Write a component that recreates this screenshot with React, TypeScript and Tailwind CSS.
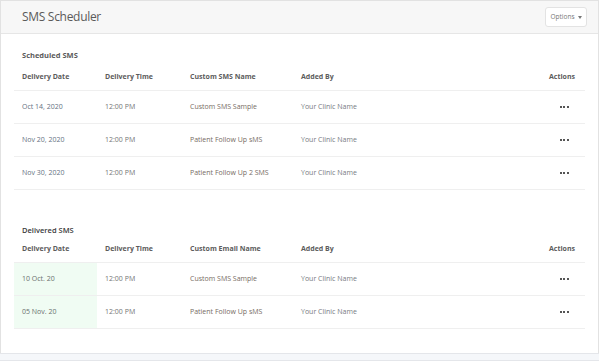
import React from 'react';

type Row = { date: string; time: string; name: string; by: string };

const scheduled: Row[] = [
  { date: 'Oct 14, 2020', time: '12:00 PM', name: 'Custom SMS Sample', by: 'Your Clinic Name' },
  { date: 'Nov 20, 2020', time: '12:00 PM', name: 'Patient Follow Up sMS', by: 'Your Clinic Name' },
  { date: 'Nov 30, 2020', time: '12:00 PM', name: 'Patient Follow Up 2 SMS', by: 'Your Clinic Name' },
];

const delivered: Row[] = [
  { date: '10 Oct. 20', time: '12:00 PM', name: 'Custom SMS Sample', by: 'Your Clinic Name' },
  { date: '05 Nov. 20', time: '12:00 PM', name: 'Patient Follow Up sMS', by: 'Your Clinic Name' },
];

const Dots = () => (
  <div className="flex gap-[1.5px]">
    <span className="w-[2px] h-[2px] bg-[#555]" />
    <span className="w-[2px] h-[2px] bg-[#555]" />
    <span className="w-[2px] h-[2px] bg-[#555]" />
  </div>
);

const HeaderRow = ({ nameLabel, h }: { nameLabel: string; h: string }) => (
  <div className={`flex items-center ${h} border-b border-[#efefef] text-[7px] font-bold text-[#5c5c5c]`}>
    <div className="w-[83px] pl-[8px]">Delivery Date</div>
    <div className="w-[85px] pl-[8px]">Delivery Time</div>
    <div className="w-[111px] pl-[8px]">{nameLabel}</div>
    <div className="flex-1 pl-[8px]">Added By</div>
    <div className="pr-[10px]">Actions</div>
  </div>
);

const DataRow = ({ row, green }: { row: Row; green?: boolean }) => (
  <div className="flex h-[33px] border-b border-[#efefef] text-[7px]">
    <div className={`w-[83px] pl-[8px] flex items-center ${green ? 'bg-[#f0fcf3] text-[#6a716e]' : 'text-[#66717f]'}`}>{row.date}</div>
    <div className="w-[85px] pl-[8px] flex items-center text-[#757575]">{row.time}</div>
    <div className="w-[111px] pl-[8px] flex items-center text-[#776c64]">{row.name}</div>
    <div className="flex-1 pl-[8px] flex items-center text-[#777b82]">{row.by}</div>
    <div className="w-[40px] flex items-center justify-center pr-[2px]">
      <Dots />
    </div>
  </div>
);

export default function App() {
  return (
    <div className="w-[600px] h-[361px] bg-white flex flex-col overflow-hidden" style={{ fontFamily: '"Open Sans", sans-serif' }}>
      <div className="h-[353px] w-[599px] border-l border-r border-t border-[#e2e2e2] flex flex-col">
        <div className="h-[33px] shrink-0 bg-[#f7f7f7] border-b border-[#e6e6e6] flex items-center justify-between pl-[21px] pr-[11px]">
          <span className="text-[12px] tracking-[-0.3px] text-[#5a5a5a] leading-none">SMS Scheduler</span>
          <button className="h-[20px] w-[42px] bg-white border border-[#e3e3e3] rounded-[3px] flex items-center justify-center gap-[3px] text-[6.5px] text-[#777]">
            Options
            <span className="w-0 h-0 border-l-[2.5px] border-r-[2.5px] border-t-[3px] border-l-transparent border-r-transparent border-t-[#777]" />
          </button>
        </div>

        <div className="px-[13px]">
          <div className="pt-[16px] pl-[8px] h-[31px] text-[7.5px] font-bold text-[#5a5a5a] leading-[11px]">Scheduled SMS</div>
          <HeaderRow nameLabel="Custom SMS Name" h="h-[26px]" />
          {scheduled.map((r) => (
            <DataRow key={r.date} row={r} />
          ))}

          <div className="mt-[35px] pl-[8px] h-[11px] text-[7.5px] font-semibold text-[#3a3a3a] leading-[11px]">Delivered SMS</div>
          <HeaderRow nameLabel="Custom Email Name" h="h-[27px]" />
          {delivered.map((r) => (
            <DataRow key={r.date} row={r} green />
          ))}
        </div>
      </div>
      <div className="h-[8px] w-[599px] border-t border-b border-[#e4e6ea] bg-[#f5f7fa]" />
    </div>
  );
}
